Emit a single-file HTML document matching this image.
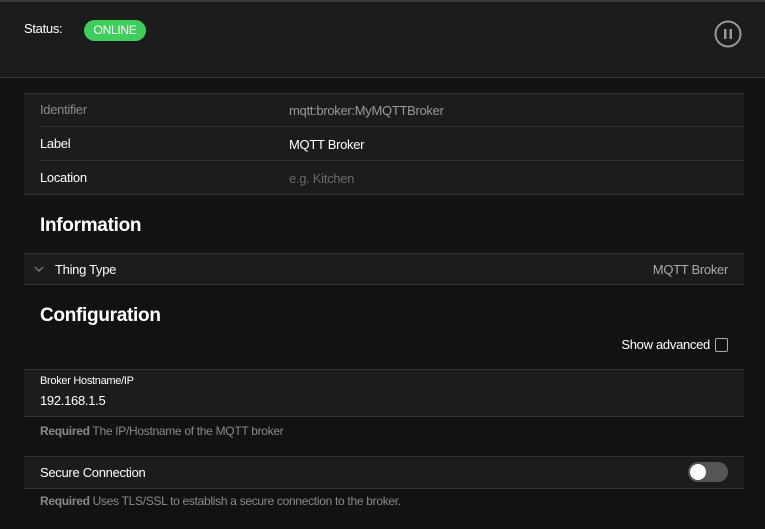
<!DOCTYPE html>
<html><head><style>
*{margin:0;padding:0;box-sizing:border-box}
body{width:765px;height:529px;background:#121212;font-family:"Liberation Sans",sans-serif;color:#fff;position:relative;overflow:hidden;font-size:13px}
.a{position:absolute}
.hdr{left:0;top:0;width:765px;height:78px;background:#1c1c1c;border-top:2px solid #3a3a3a;border-bottom:1px solid #3a3a3a}
.blk{left:24px;width:720px;background:#1c1c1c;border-top:1px solid #333;border-bottom:1px solid #333}
.sep{position:absolute;left:16px;right:0;height:1px;background:#333}
.t{position:absolute;white-space:nowrap;letter-spacing:-0.3px}
h2{position:absolute;font-size:19px;font-weight:bold;letter-spacing:-0.3px}
</style></head><body>
<div class="a hdr">
 <div class="t" style="left:24px;top:19px;font-size:13px">Status:</div>
 <div class="a" style="left:84px;top:18px;width:62px;height:21px;border-radius:11px;background:#3fce5c;font-size:12px;text-align:center;line-height:21px;letter-spacing:-0.3px">ONLINE</div>
 <svg class="a" style="left:713px;top:17px" width="30" height="30" viewBox="0 0 30 30"><circle cx="15" cy="15" r="12.5" fill="none" stroke="#999" stroke-width="2"/><rect x="11" y="10" width="2.5" height="10" fill="#999"/><rect x="16.5" y="10" width="2.5" height="10" fill="#999"/></svg>
</div>
<div class="a blk" style="top:93px;height:102px">
 <div class="t" style="left:16px;top:8px;color:#8a8a8a">Identifier</div>
 <div class="t" style="left:265px;top:9px;color:#9a9a9a">mqtt:broker:MyMQTTBroker</div>
 <div class="sep" style="top:32px"></div>
 <div class="t" style="left:16px;top:42px">Label</div>
 <div class="t" style="left:265px;top:43px">MQTT Broker</div>
 <div class="sep" style="top:66px"></div>
 <div class="t" style="left:16px;top:76px">Location</div>
 <div class="t" style="left:265px;top:77px;color:#6a6a6a">e.g. Kitchen</div>
</div>
<h2 style="left:40px;top:215px">Information</h2>
<div class="a blk" style="top:253px;height:32px">
 <svg class="a" style="left:10px;top:11px" width="10" height="8" viewBox="0 0 10 8"><path d="M1 2l4 4 4-4" fill="none" stroke="#888" stroke-width="1.2"/></svg>
 <div class="t" style="left:31px;top:8px">Thing Type</div>
 <div class="t" style="right:16px;top:8px;color:#aaa">MQTT Broker</div>
</div>
<h2 style="left:40px;top:305px">Configuration</h2>
<div class="t" style="right:55px;top:337px">Show advanced</div>
<div class="a" style="left:715px;top:338px;width:13px;height:14px;border:1px solid #aaa;border-radius:2px"></div>
<div class="a blk" style="top:369px;height:48px">
 <div class="t" style="left:16px;top:5px;font-size:11px">Broker Hostname/IP</div>
 <div class="t" style="left:16px;top:23px">192.168.1.5</div>
</div>
<div class="t" style="left:40px;top:424px;font-size:12px;color:#8a8a8a"><b>Required</b> The IP/Hostname of the MQTT broker</div>
<div class="a blk" style="top:456px;height:33px">
 <div class="t" style="left:16px;top:8px">Secure Connection</div>
 <div class="a" style="left:664px;top:5px;width:40px;height:20px;border-radius:10px;background:#555"><div class="a" style="left:2px;top:2px;width:16px;height:16px;border-radius:8px;background:#fff"></div></div>
</div>
<div class="t" style="left:40px;top:494px;font-size:12px;color:#8a8a8a"><b>Required</b> Uses TLS/SSL to establish a secure connection to the broker.</div>
</body></html>
